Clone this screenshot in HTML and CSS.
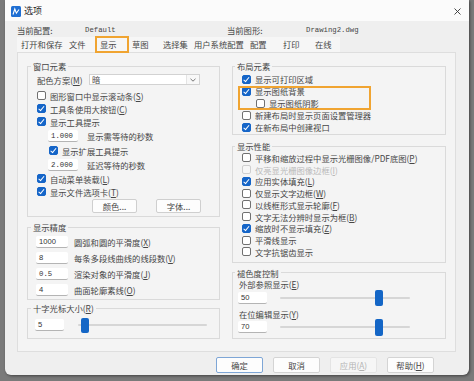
FILE: index.html
```html
<!DOCTYPE html>
<html lang="zh-CN">
<head>
  <meta charset="UTF-8">
  <title>选项</title>
  <link rel="stylesheet" href="styles.css">
</head>
<body>

  <div class="dialog">
    <!-- Title bar -->
    <div class="titlebar">
      <svg class="app-icon" viewBox="0 0 10 11">
        <rect width="10" height="11" rx="1.5" fill="#1f6fd3"/>
        <path d="M2 8.5 L3.8 3 L5.4 7.2 L8 3.5" stroke="#fff" stroke-width="1.1" fill="none"/>
      </svg>
      <span class="title">选项</span>
      <svg class="close" viewBox="0 0 7 7">
        <path d="M0.5 0.5 L6.5 6.5 M6.5 0.5 L0.5 6.5" stroke="#333" stroke-width="0.9"/>
      </svg>
    </div>

    <div class="dlg-body">
      <div class="profile">
        <span>当前配置:</span><span class="mono">Default</span>
        <span>当前图形:</span><span class="mono">Drawing2.dwg</span>
      </div>

      <div class="tabs">
        <span class="tab">打开和保存</span>
        <span class="tab">文件</span>
        <span class="tab active">显示</span>
        <span class="tab">草图</span>
        <span class="tab">选择集</span>
        <span class="tab">用户系统配置</span>
        <span class="tab">配置</span>
        <span class="tab">打印</span>
        <span class="tab">在线</span>
      </div>

      <div class="panel">
        <!-- Left column -->
        <div class="col">
          <fieldset class="group g-window">
            <legend>窗口元素</legend>
            <div class="select-row">
              <span class="select-label">配色方案(<u>M</u>)</span>
              <div class="select">
                <span class="select-value">暗</span>
                <span class="select-arrow">
                  <svg viewBox="0 0 6 4"><path d="M0.5 0.8 L3 3.2 L5.5 0.8" stroke="#555" stroke-width="0.8" fill="none"/></svg>
                </span>
              </div>
            </div>
            <div class="check first"><span class="box"></span>图形窗口中显示滚动条(<u>S</u>)</div>
            <div class="check"><span class="box on"></span>工具条使用大按钮(<u>C</u>)</div>
            <div class="check"><span class="box on"></span>显示工具提示</div>
            <div class="delay-row"><span class="num mono">1.000</span><span class="delay-label">显示需等待的秒数</span></div>
            <div class="check indent"><span class="box on"></span>显示扩展工具提示</div>
            <div class="delay-row second"><span class="num mono">2.000</span><span class="delay-label">延迟等待的秒数</span></div>
            <div class="check after-delay"><span class="box on"></span>自动菜单装载(<u>L</u>)</div>
            <div class="check"><span class="box on"></span>显示文件选项卡(<u>T</u>)</div>
            <div class="font-buttons">
              <span class="btn">颜色...</span>
              <span class="btn">字体...</span>
            </div>
          </fieldset>

          <fieldset class="group g-precision">
            <legend>显示精度</legend>
            <div class="prec-row"><span class="num">1000</span><span class="prec-label">圆弧和圆的平滑度(<u>X</u>)</span></div>
            <div class="prec-row"><span class="num">8</span><span class="prec-label">每条多段线曲线的线段数(<u>V</u>)</span></div>
            <div class="prec-row"><span class="num mono">0.5</span><span class="prec-label">渲染对象的平滑度(<u>J</u>)</span></div>
            <div class="prec-row"><span class="num">4</span><span class="prec-label">曲面轮廓素线(<u>O</u>)</span></div>
          </fieldset>

          <fieldset class="group g-cursor">
            <legend>十字光标大小(<u>R</u>)</legend>
            <div class="slider-row">
              <span class="num narrow">5</span>
              <div class="slider cursor-slider"><span class="thumb" style="left: 3px;"></span></div>
            </div>
          </fieldset>
        </div>

        <!-- Right column -->
        <div class="col">
          <fieldset class="group g-layout">
            <legend>布局元素</legend>
            <div class="check"><span class="box on"></span>显示可打印区域</div>
            <div class="highlight">
              <div class="check"><span class="box on"></span>显示图纸背景</div>
              <div class="check indent"><span class="box"></span>显示图纸阴影</div>
            </div>
            <div class="check"><span class="box"></span>新建布局时显示页面设置管理器</div>
            <div class="check"><span class="box on"></span>在新布局中创建视口</div>
          </fieldset>

          <fieldset class="group g-perf">
            <legend>显示性能</legend>
            <div class="check"><span class="box"></span>平移和缩放过程中显示光栅图像/PDF底图(<u>P</u>)</div>
            <div class="check disabled"><span class="box"></span>仅亮显光栅图像边框(<u>I</u>)</div>
            <div class="check"><span class="box on"></span>应用实体填充(<u>L</u>)</div>
            <div class="check"><span class="box"></span>仅显示文字边框(<u>W</u>)</div>
            <div class="check"><span class="box"></span>以线框形式显示轮廓(<u>F</u>)</div>
            <div class="check"><span class="box"></span>文字无法分辨时显示为框(<u>B</u>)</div>
            <div class="check"><span class="box on"></span>缩放时不显示填充(<u>Z</u>)</div>
            <div class="check"><span class="box"></span>平滑线显示</div>
            <div class="check"><span class="box"></span>文字抗锯齿显示</div>
          </fieldset>

          <fieldset class="group g-fade">
            <legend>褪色度控制</legend>
            <div class="fade-label">外部参照显示(<u>E</u>)</div>
            <div class="slider-row fade-row">
              <span class="num narrow">50</span>
              <div class="slider fade-slider"><span class="thumb" style="left: 95px;"></span></div>
            </div>
            <div class="fade-label second">在位编辑显示(<u>Y</u>)</div>
            <div class="slider-row fade-row last">
              <span class="num narrow">70</span>
              <div class="slider fade-slider"><span class="thumb" style="left: 95px;"></span></div>
            </div>
          </fieldset>
        </div>
      </div>

      <div class="actions">
        <span class="btn-lg default">确定</span>
        <span class="btn-lg">取消</span>
        <span class="btn-lg disabled">应用(<u>A</u>)</span>
        <span class="btn-lg">帮助(<u>H</u>)</span>
      </div>
    </div>
  </div>

</body>
</html>
```

FILE: styles.css
```css
* {
  box-sizing: border-box;
}

body {
  margin: 0;
  width: 474px;
  height: 381px;
  overflow: hidden;
  background: #7a7a7a;
  font-family: "Noto Sans CJK SC", sans-serif;
  font-size: 8.3px;
  color: #464646;
}

u {
  text-decoration-thickness: 0.6px;
  text-underline-offset: 1px;
}

.dialog {
  margin-left: 5px;
  width: 464px;
  height: 375px;
  background: #efefef;
  border-radius: 0 0 6px 6px;
  box-shadow: 1px 1px 3px rgba(0, 0, 0, 0.45);
  overflow: hidden;
}

/* title bar */
.titlebar {
  height: 21px;
  background: #fbfbfb;
  display: flex;
  align-items: center;
  padding: 1px 0 0 6px;
}

.app-icon {
  display: block;
  width: 10px;
  height: 11px;
}

.title {
  margin-left: 3px;
  font-size: 9px;
  line-height: 12px;
  color: #1e1e1e;
}

.close {
  margin-left: auto;
  margin-right: 8px;
  width: 7px;
  height: 7px;
}

.dlg-body {
  padding: 3px 0 0 12px;
}

.profile {
  display: grid;
  grid-template-columns: 68px 142px 79px auto;
  height: 12px;
  line-height: 12px;
}

.mono {
  font-family: "Liberation Mono", monospace;
  font-size: 7.3px;
}

/* tabs */
.tabs {
  margin-top: 1px;
  width: 323px;
  height: 15px;
  display: grid;
  grid-template-columns: 48px 31px 32px 31px 31px 56px 33px 32px 29px;
  background: #f6f6f6;
}

.tab {
  padding-left: 4px;
  line-height: 14px;
  white-space: nowrap;
}

.tab.active {
  outline: 2px solid #f0a431;
  outline-offset: -1px;
}

/* tab page */
.panel {
  width: 439px;
  height: 300px;
  background: #f4f4f4;
  border: 1px solid #dedede;
  padding: 8px 9px 0;
  display: grid;
  grid-template-columns: 193px 214px;
  column-gap: 12px;
  align-items: start;
}

.group {
  margin: 0;
  min-width: 0;
  border: 1px solid #dadada;
  padding: 0 3px 0 9px;
}

.group legend {
  height: 10px;
  line-height: 10px;
  padding: 0 2px;
  margin-left: -6px;
  white-space: nowrap;
}

/* checkboxes */
.check {
  display: flex;
  align-items: center;
  height: 13px;
  white-space: nowrap;
}

.box {
  flex: none;
  width: 9px;
  height: 9px;
  margin-right: 4px;
  border: 1px solid #707070;
  border-radius: 2px;
  background: #fff;
}

.box.on {
  background: #1565c8;
  border-color: #1565c8;
}

.box.on::after {
  content: '';
  display: block;
  width: 2.2px;
  height: 4.6px;
  margin: 0.4px 0 0 2.4px;
  border: solid #fff;
  border-width: 0 1.1px 1.1px 0;
  transform: rotate(40deg);
}

.check.disabled {
  color: #b9b9b9;
}

.check.disabled .box {
  border-color: #cfcfcf;
  background: #f7f7f7;
}

/* inputs */
.num {
  flex: none;
  width: 30px;
  height: 12px;
  line-height: 12px;
  padding-left: 3px;
  background: #fff;
  border-bottom: 1px solid #b4b4b4;
  border-radius: 2px;
  font-family: "Liberation Sans", sans-serif;
  font-size: 7.6px;
  color: #333;
}

.num.mono {
  font-family: "Liberation Mono", monospace;
  font-size: 7.3px;
}

/* window elements */
.g-window {
  padding-bottom: 3px;
  padding-top: 3px;
}

.select-row {
  display: flex;
  align-items: center;
  height: 11px;
}

.select-label {
  width: 52px;
  white-space: nowrap;
}

.select {
  display: flex;
  width: 111px;
  height: 11px;
  background: #fff;
  border: 1px solid #d2d2d2;
}

.select-value {
  flex: 1;
  padding-left: 2px;
  line-height: 9px;
}

.select-arrow {
  width: 13px;
  border-left: 1px solid #e4e4e4;
  background: #f8f8f8;
  display: flex;
  align-items: center;
  justify-content: center;
}

.select-arrow svg {
  width: 6px;
  height: 4px;
}

.g-window .check.first {
  margin-top: 4px;
}

.g-window .check.indent {
  margin-top: 2px;
  padding-left: 12px;
}

.delay-row {
  display: flex;
  align-items: center;
  height: 13px;
  margin-top: 1px;
  padding-left: 11px;
}

.delay-label {
  margin-left: 9px;
}

.g-window .check.after-delay {
  margin-top: 1px;
}

.font-buttons {
  display: flex;
  gap: 19px;
  margin: 1px 0 0 55px;
}

.btn {
  width: 45px;
  height: 14px;
  display: flex;
  align-items: center;
  justify-content: center;
  background: #fdfdfd;
  border: 1px solid #cfcfcf;
  border-radius: 2px;
}

/* display precision */
.g-precision {
  margin-top: 5px;
  padding: 2px 3px 1px 8px;
}

.g-precision legend {
  margin-left: -5px;
}

.prec-row {
  display: flex;
  align-items: center;
  height: 16px;
}

.prec-row .num {
  width: 32px;
}

.prec-label {
  margin-left: 6px;
  white-space: nowrap;
}

/* crosshair size */
.g-cursor {
  margin-top: 3px;
  padding: 4px 3px 5px 7px;
}

.g-cursor legend {
  margin-left: -4px;
}

.slider-row {
  display: flex;
  align-items: center;
  height: 16px;
}

.num.narrow {
  width: 29px;
}

.slider {
  position: relative;
  flex: none;
}

.slider::before {
  content: '';
  position: absolute;
  left: 0;
  right: 0;
  top: 50%;
  height: 2px;
  margin-top: -1px;
  background: #d6d6d6;
  border-radius: 1px;
}

.thumb {
  position: absolute;
  top: 0;
  width: 8px;
  height: 100%;
  background: #1466c6;
  border-radius: 2px;
}

.cursor-slider {
  width: 129px;
  height: 15px;
  margin-left: 14px;
}

/* layout elements */
.g-layout {
  padding: 2px 3px 1px 9px;
}

.g-layout legend,
.g-perf legend {
  margin-left: -7px;
}

.g-layout .check {
  height: 12px;
}

.g-layout .check.indent {
  padding-left: 14px;
}

.highlight {
  position: relative;
  width: 137px;
  margin-left: -6px;
  padding-left: 6px;
}

.highlight::after {
  content: '';
  position: absolute;
  top: 1px;
  bottom: -1px;
  left: 2px;
  right: 2px;
  border: 2px solid #f0a431;
}

/* performance */
.g-perf {
  margin-top: 6px;
  padding: 1px 3px 4px 9px;
}

.g-perf .check {
  height: 11.75px;
}

/* fade control */
.g-fade {
  margin-top: 5px;
  padding: 1px 3px 2px 5px;
}

.g-fade legend {
  margin-left: -3px;
}

.fade-label {
  height: 10px;
  line-height: 10px;
  padding-left: 1px;
  white-space: nowrap;
}

.fade-label.second {
  margin-top: 1px;
}

.fade-row {
  height: 19px;
}

.fade-row.last {
  height: 17px;
}

.fade-slider {
  width: 130px;
  height: 16px;
  margin-left: 13px;
}

.fade-row.last .fade-slider {
  height: 17px;
}

/* dialog buttons */
.actions {
  display: flex;
  gap: 10px;
  margin-top: 5px;
  padding-left: 199px;
}

.btn-lg {
  width: 47px;
  height: 16px;
  display: flex;
  align-items: center;
  justify-content: center;
  background: #fdfdfd;
  border: 1px solid #d4d4d4;
  border-radius: 2px;
}

.btn-lg.default {
  border-color: #7ea6d6;
}

.btn-lg.disabled {
  background: #f6f6f6;
  border-color: #e4e4e4;
  color: #b3b3b3;
}
```
